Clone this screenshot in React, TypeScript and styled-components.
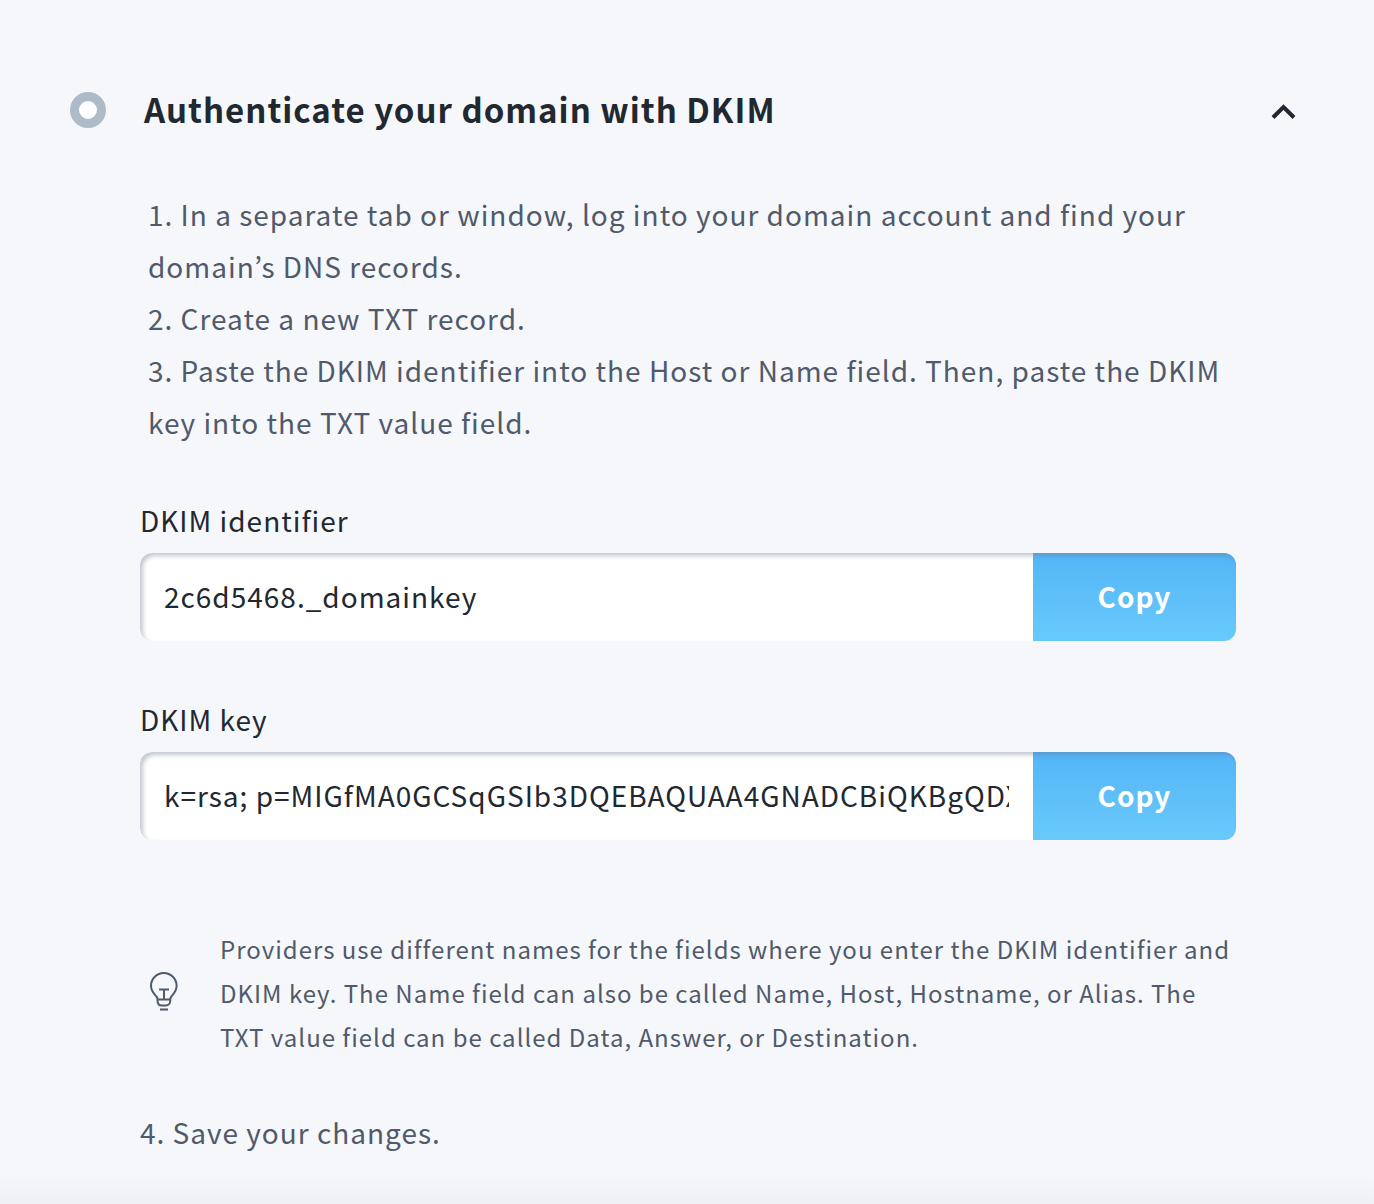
import React from "react";
import styled, { createGlobalStyle } from "styled-components";

const fontStack = `"Noto Sans CJK KR", "Noto Sans", sans-serif`;

const GlobalStyle = createGlobalStyle`
  *, *::before, *::after { box-sizing: border-box; }
  body {
    margin: 0;
    background: #f5f7fb;
    color: #222830;
    font-family: ${fontStack};
    letter-spacing: 1px;
  }
`;

const Page = styled.main`
  display: flex;
  flex-direction: column;
  min-height: 100vh;
  padding: 80px 78px 0 70px;
  background: linear-gradient(to top, #f0f1f5 0, #f5f7fb 32px);
`;

const Header = styled.header`
  display: flex;
  align-items: center;
  height: 60px;
`;

const StepLabel = styled.label`
  display: flex;
  flex: 1;
  align-items: center;
  gap: 38px;
`;

const StepRadio = styled.input`
  appearance: none;
  flex: none;
  width: 36px;
  height: 36px;
  margin: 0;
  border: 9px solid #adbbc9;
  border-radius: 50%;
  background: #fff;
`;

const Title = styled.h1`
  margin: 0;
  padding-bottom: 2px;
  font-size: 33px;
  line-height: 58px;
  font-weight: 700;
`;

const ToggleButton = styled.button`
  display: flex;
  padding: 0;
  border: 0;
  background: none;
  color: #222830;
  cursor: pointer;
`;

const Body = styled.section`
  display: flex;
  flex-direction: column;
  padding: 48px 60px 0 70px;
`;

const Steps = styled.ol`
  margin: 0;
  padding: 0 8px;
  list-style: none;
  color: #505a6b;
  font-size: 28px;
  line-height: 52px;
`;

const Fields = styled.div`
  display: flex;
  flex-direction: column;
  gap: 58px;
  margin-top: 52px;
`;

const Field = styled.div`
  display: flex;
  flex-direction: column;
`;

const FieldLabel = styled.label`
  font-size: 28px;
  line-height: 40px;
  margin-bottom: 13px;
`;

const CopyGroup = styled.div`
  position: relative;
  display: flex;
  height: 88px;
  border-radius: 12px;
  overflow: hidden;

  &::after {
    content: "";
    position: absolute;
    inset: 0;
    border-radius: inherit;
    box-shadow: inset 3px 3px 4px rgba(100, 115, 140, 0.38);
    pointer-events: none;
  }
`;

const CopyInput = styled.input`
  flex: 1;
  min-width: 0;
  padding: 0 24px 2px;
  border: 0;
  outline: 0;
  background: #fff;
  color: #222830;
  font-family: inherit;
  font-size: 28px;
  letter-spacing: inherit;
`;

const CopyButton = styled.button`
  flex: none;
  width: 203px;
  padding: 0 0 2px;
  border: 0;
  background: linear-gradient(#54b5f7, #68cafa);
  color: #fff;
  font-family: inherit;
  font-size: 28px;
  font-weight: 700;
  letter-spacing: inherit;
  cursor: pointer;
`;

const Tip = styled.aside`
  display: flex;
  align-items: center;
  gap: 40px;
  margin-top: 87px;
  padding-left: 8px;
`;

const TipText = styled.p`
  flex: 1;
  margin: 0;
  color: #505a6b;
  font-size: 24px;
  line-height: 44px;
`;

const LastStep = styled.p`
  margin: 47px 0 0;
  color: #505a6b;
  font-size: 28px;
  line-height: 52px;
`;

const ChevronUp = () => (
  <svg width="25" height="20" viewBox="0 0 25 20" fill="none" aria-hidden="true">
    <path d="M2 17.500 12.500 7 23 17.500" stroke="currentColor" strokeWidth="4" />
  </svg>
);

const Bulb = () => (
  <svg width="32" height="44" viewBox="0 0 32 44" fill="none" stroke="#505a6b" strokeWidth="2" aria-hidden="true">
    <path d="M9.500 29.500V27.500C8.600 24.500 3 21.500 3 15a12.800 13 0 0 1 25.600 0C28.600 21.500 23.200 24.500 22.300 27.500v2c0 3-2 5-4.500 5h-4c-2.500 0-4.300-2-4.300-5Z" />
    <path d="M9.500 28.500h13M11 18.500h10M16 18.500v10M12 38.500h8" />
  </svg>
);

interface CopyFieldProps {
  id: string;
  label: string;
  value: string;
}

const CopyField = ({ id, label, value }: CopyFieldProps) => (
  <Field>
    <FieldLabel htmlFor={id}>{label}</FieldLabel>
    <CopyGroup>
      <CopyInput id={id} type="text" readOnly value={value} />
      <CopyButton type="button" onClick={() => navigator.clipboard?.writeText(value)}>
        Copy
      </CopyButton>
    </CopyGroup>
  </Field>
);

export default function App() {
  const [open, setOpen] = React.useState(true);
  return (
    <>
      <GlobalStyle />
      <Page>
        <Header>
          <StepLabel>
            <StepRadio type="radio" name="step" />
            <Title>Authenticate your domain with DKIM</Title>
          </StepLabel>
          <ToggleButton type="button" aria-label="Toggle section" aria-expanded={open} onClick={() => setOpen(!open)}>
            <ChevronUp />
          </ToggleButton>
        </Header>
        {open && (
          <Body>
            <Steps>
              <li>1. In a separate tab or window, log into your domain account and find your domain’s DNS records.</li>
              <li>2. Create a new TXT record.</li>
              <li>3. Paste the DKIM identifier into the Host or Name field. Then, paste the DKIM key into the TXT value field.</li>
            </Steps>
            <Fields>
              <CopyField id="dkim-identifier" label="DKIM identifier" value="2c6d5468._domainkey" />
              <CopyField id="dkim-key" label="DKIM key" value="k=rsa; p=MIGfMA0GCSqGSIb3DQEBAQUAA4GNADCBiQKBgQDX" />
            </Fields>
            <Tip>
              <Bulb />
              <TipText>
                Providers use different names for the fields where you enter the DKIM identifier and DKIM key. The Name
                field can also be called Name, Host, Hostname, or Alias. The TXT value field can be called Data, Answer,
                or Destination.
              </TipText>
            </Tip>
            <LastStep>4. Save your changes.</LastStep>
          </Body>
        )}
      </Page>
    </>
  );
}
